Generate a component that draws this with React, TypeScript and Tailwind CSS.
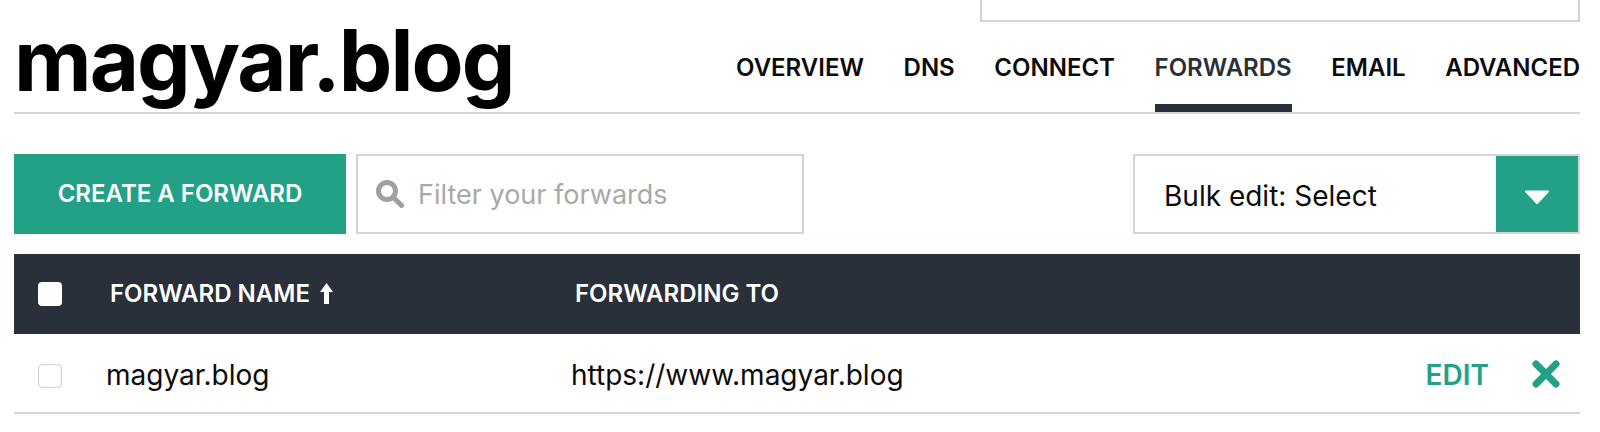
const navItems = ["OVERVIEW", "DNS", "CONNECT", "FORWARDS", "EMAIL", "ADVANCED"];

function App() {
  return (
    <div className="w-[1600px] h-[432px] bg-white overflow-hidden font-['Inter',sans-serif] text-black">
      <div className="w-[1566px] ml-[14px]">
        {/* Account search box, cut off by the top of the page */}
        <div className="flex justify-end h-[22px]">
          <div className="w-[600px] h-[22px] border-2 border-t-0 border-[#d4d4d4]"></div>
        </div>

        {/* Title and tabs */}
        <div className="flex justify-between h-[92px] border-b-2 border-[#d4d4d4]">
          <h1 className="text-[85px] leading-[77px] font-[650] tracking-[-1.9px] font-['Inter',sans-serif]">magyar.blog</h1>
          <nav className="flex gap-[39.6px] items-stretch">
            {navItems.map((item) => (
              <a
                key={item}
                className={
                  item === "FORWARDS"
                    ? "pt-[30px] text-[24px] leading-[32px] font-semibold text-[#29303a] border-b-[8px] border-[#29303a]"
                    : "pt-[30px] text-[24px] leading-[32px] font-semibold text-[#0c0c0c]"
                }
              >
                {item}
              </a>
            ))}
          </nav>
        </div>

        {/* Toolbar */}
        <div className="flex mt-[40px] h-[80px]">
          <button className="w-[332px] bg-[#22a186] text-white text-[24px] font-semibold">CREATE A FORWARD</button>
          <div className="w-[448px] ml-[10px] border-2 border-[#d4d4d4] flex items-center pl-[18px]">
            <svg width="28" height="28" viewBox="0 0 28 28">
              <circle cx="11" cy="11" r="8.5" fill="none" stroke="#a0a0a0" strokeWidth="5" />
              <path d="M17.5 17.5l8 8" stroke="#a0a0a0" strokeWidth="5" strokeLinecap="round" />
            </svg>
            <span className="ml-[14px] pt-[2px] text-[27px] text-[#a9a9a9]">Filter your forwards</span>
          </div>
          <div className="w-[447px] ml-auto border-2 border-[#d4d4d4] flex">
            <span className="flex-1 pl-[29px] pt-[4px] flex items-center text-[28px] text-[#0c0c0c]">Bulk edit: Select</span>
            <div className="w-[82px] bg-[#22a186] flex items-center justify-center">
              <svg width="26" height="16" viewBox="0 0 26 16" className="mt-[6px]">
                <path d="M2 1.5h22a1 1 0 0 1 .8 1.6L14 14.6a1.3 1.3 0 0 1-2 0L1.2 3.1A1 1 0 0 1 2 1.5z" fill="#fff" />
              </svg>
            </div>
          </div>
        </div>

        {/* Table */}
        <div className="mt-[20px]">
          <div className="flex items-center h-[80px] bg-[#29303a] text-white text-[24px] font-semibold">
            <div className="w-[24px] h-[24px] ml-[24px] rounded-[4px] bg-white"></div>
            <div className="w-[465px] ml-[48px] flex items-center">
              FORWARD NAME
              <svg width="13" height="21" viewBox="0 0 13 21" className="ml-[10px] mb-[2px]">
                <path d="M6.5 0L13 9H9v12H4V9H0z" fill="#fff" />
              </svg>
            </div>
            <div>FORWARDING TO</div>
          </div>
          <div className="flex items-center h-[80px] pt-[6px] border-b-2 border-[#d4d4d4] text-[28px] text-[#0c0c0c]">
            <div className="w-[24px] h-[24px] ml-[24px] rounded-[4px] bg-white border border-[#d4d4d4] shadow-[inset_0_0_2px_rgba(0,0,0,0.1)]"></div>
            <div className="w-[465px] ml-[44px] mb-[2px]">magyar.blog</div>
            <div className="mb-[2px]">https://www.magyar.blog</div>
            <a className="ml-auto mb-[2px] text-[#22a186] text-[28px] font-semibold">EDIT</a>
            <svg width="30" height="30" viewBox="0 0 30 30" className="ml-[42px] mr-[19px] mb-[4px]">
              <path d="M5 5l20 20M25 5L5 25" stroke="#22a186" strokeWidth="7" strokeLinecap="round" />
            </svg>
          </div>
        </div>
      </div>
    </div>
  );
}

export default App;
